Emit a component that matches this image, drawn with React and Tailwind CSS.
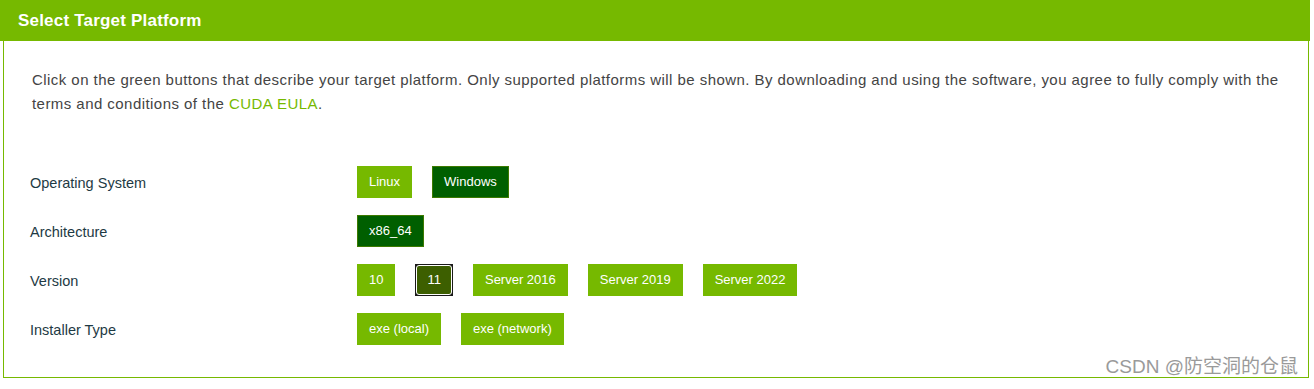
import { useState } from "react";

const rows = [
  { label: "Operating System", options: ["Linux", "Windows"], selected: "Windows" },
  { label: "Architecture", options: ["x86_64"], selected: "x86_64" },
  { label: "Version", options: ["10", "11", "Server 2016", "Server 2019", "Server 2022"], selected: "11", focused: "11" },
  { label: "Installer Type", options: ["exe (local)", "exe (network)"], selected: null },
];

function OptionButton({ text, selected, focused }) {
  if (focused) {
    return (
      <button className="h-8 px-[1px] py-[1px] bg-[#1a1a1a]">
        <span className="flex h-full items-center rounded-[3px] border border-white bg-[#3d5f00] px-[10px] text-[13px] text-white">
          {text}
        </span>
      </button>
    );
  }
  return (
    <button
      className={
        "h-8 px-[11px] text-[13px] text-white border " +
        (selected ? "bg-[#005f00] border-[#3d7a00]" : "bg-[#76b900] border-[#76b900]")
      }
    >
      {text}
    </button>
  );
}

export default function App() {
  const [sel] = useState(rows);

  return (
    <div className="relative w-[1314px] h-[389px] bg-white" style={{ fontFamily: '"Liberation Sans", "Noto Sans CJK SC", sans-serif' }}>
      <div className="w-[1310px] h-[41px] bg-[#76b900] flex items-center pl-[18px]">
        <h2 className="text-[17px] tracking-[0.2px] font-bold text-white">Select Target Platform</h2>
      </div>
      <div className="ml-[3px] w-[1306px] border-l border-r border-b border-[#76b900] pl-[28px] pr-4 pt-[27px] pb-[32px]">
        <p className="text-[15px] tracking-[0.45px] leading-6 text-[#444]">
          Click on the green buttons that describe your target platform. Only supported platforms will be shown. By downloading and using the software, you agree to fully comply with the terms and conditions of the <a className="text-[#76b900]">CUDA EULA</a>.
        </p>

        <div className="mt-[50px] flex flex-col gap-[17px]">
          {sel.map((r) => (
            <div key={r.label} className="flex items-center">
              <div className="w-[327px] -ml-[2px] pt-[4px] text-[14.5px] text-[#1e3a44]">{r.label}</div>
              <div className="flex gap-5">
                {r.options.map((o) => (
                  <OptionButton key={o} text={o} selected={r.selected === o} focused={r.focused === o} />
                ))}
              </div>
            </div>
          ))}
        </div>
      </div>
      <div className="absolute right-[16px] top-[353px] text-[19px] text-[#9a9a9a]">CSDN @防空洞的仓鼠</div>
    </div>
  );
}
